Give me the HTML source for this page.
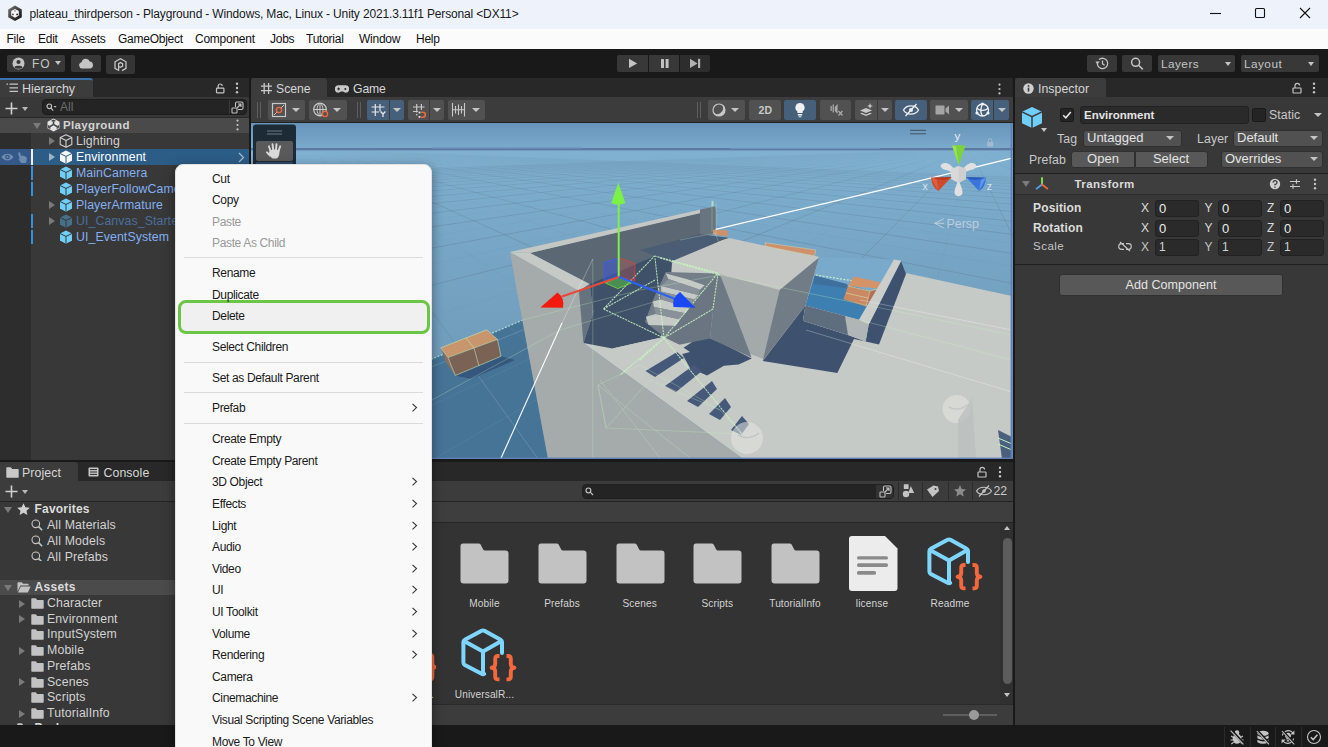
<!DOCTYPE html>
<html><head><meta charset="utf-8">
<style>
*{box-sizing:border-box;margin:0;padding:0}
html,body{width:1328px;height:747px;overflow:hidden;background:#191919;font-family:"Liberation Sans",sans-serif;font-size:12px;color:#d2d2d2}
.abs{position:absolute}
#titlebar{left:0;top:0;width:1328px;height:28.5px;background:#eef3fb;color:#1a1a1a;font-size:13px}
#menubar{left:0;top:28.5px;width:1328px;height:20.5px;background:#fbfbfb;color:#111;font-size:12px;letter-spacing:-0.25px}
#menubar span{position:absolute;top:3.5px}
#toolbar{left:0;top:49px;width:1328px;height:29px;background:#191919}
.tbtn{position:absolute;background:#383838;border-radius:2px;height:18px;top:5px}
.panel{position:absolute;background:#383838;overflow:hidden}
.tabbar{position:absolute;background:#282828;height:19px}
.tab{position:absolute;top:0;height:19px;background:#3c3c3c;border-radius:3px 3px 0 0;color:#d6d6d6;font-size:13px}
.row{position:absolute;left:0;height:16px;width:249px;font-size:13px;line-height:16px;white-space:nowrap}
.btn{position:absolute;background:#515151;border-radius:2px;height:20px}
.btn.on{background:#46607c}
.fld{position:absolute;background:#2a2a2a;border:1px solid #212121;border-radius:3px;color:#e4e4e4;font-size:13px;line-height:15px;padding-left:4px;height:17px}
.dd{position:absolute;background:#515151;border:1px solid #303030;border-radius:3px;color:#e4e4e4;font-size:13px;line-height:14px;padding-left:3px;height:17px}
.tri{position:absolute;width:0;height:0;border-left:4px solid transparent;border-right:4px solid transparent;border-top:5px solid #c4c4c4}
.trir{position:absolute;width:0;height:0;border-top:4px solid transparent;border-bottom:4px solid transparent;border-left:6px solid #7a7a7a}
.trid{position:absolute;width:0;height:0;border-left:4px solid transparent;border-right:4px solid transparent;border-top:6px solid #7a7a7a}
.lbl{position:absolute;white-space:nowrap}
#ctx{left:175px;top:164px;width:257px;height:590px;background:#f9f9f9;border:1px solid #e2e2e2;border-radius:8px 8px 0 0;color:#1b1b1b;font-size:12px;box-shadow:0 3px 12px rgba(0,0,0,.4)}
#ctx .mi{position:absolute;left:36px;white-space:nowrap;letter-spacing:-0.35px;line-height:16px}
#ctx .dis{color:#9a9a9a}
#ctx .sep{position:absolute;left:8px;width:239px;height:1px;background:#dadada}
#ctx .ar{position:absolute;left:234px;width:9px;height:9px}
</style></head><body>
<div id="titlebar" class="abs">
<svg class="abs" style="left:7px;top:5px" width="16" height="17" viewBox="0 0 16 17"><defs><linearGradient id="ug" x1="0" y1="0" x2="1" y2="1"><stop offset="0" stop-color="#787878"/><stop offset="0.55" stop-color="#3a3a3a"/><stop offset="1" stop-color="#0c0c0c"/></linearGradient></defs><path d="M8 0.6 L14.8 4.4 V12.2 L8 16 L1.2 12.2 V4.4 Z" fill="url(#ug)"/><path d="M8 4 L11.8 6.1 V10.5 L8 12.7 L4.2 10.5 V6.1 Z" fill="#f6f6f6"/><circle cx="8" cy="5.9" r="0.9" fill="#9a9a9a"/><circle cx="5.9" cy="9.4" r="0.9" fill="#4a4a4a"/><circle cx="10.1" cy="9.4" r="0.9" fill="#1c1c1c"/></svg>
<span class="lbl" style="left:29.5px;top:7px;font-size:12px;letter-spacing:-0.15px">plateau_thirdperson - Playground - Windows, Mac, Linux - Unity 2021.3.11f1 Personal &lt;DX11&gt;</span>
<svg class="abs" style="left:1200px;top:0" width="128" height="28" viewBox="0 0 128 28"><g stroke="#111" stroke-width="1.1" fill="none"><path d="M10 13.5 H21"/><rect x="55.5" y="8.5" width="9" height="9" rx="1"/><path d="M100 8 L110 18 M110 8 L100 18"/></g></svg>
</div>
<div id="menubar" class="abs"><span style="left:6.5px">File</span><span style="left:38px">Edit</span><span style="left:71px">Assets</span><span style="left:118px">GameObject</span><span style="left:195px">Component</span><span style="left:270px">Jobs</span><span style="left:306px">Tutorial</span><span style="left:359px">Window</span><span style="left:416px">Help</span></div>
<div id="toolbar" class="abs">
<div class="tbtn" style="left:7px;width:58px;top:6px;height:17px"></div>
<svg class="abs" style="left:12px;top:8px" width="13" height="13" viewBox="0 0 13 13"><circle cx="6.5" cy="6.5" r="6" fill="#c4c4c4"/><circle cx="6.5" cy="5" r="2.1" fill="#383838"/><path d="M2.4 10.2 C3 8.3 10 8.3 10.6 10.2 C9 12.2 4 12.2 2.4 10.2Z" fill="#383838"/></svg>
<span class="lbl" style="left:32px;top:7.5px;font-size:12px;color:#c4c4c4;letter-spacing:1px">FO</span>
<div class="tri" style="left:55px;top:12px;border-left-width:3.5px;border-right-width:3.5px;border-top-width:4px"></div>
<div class="tbtn" style="left:71px;width:30px;top:6px;height:17px"></div>
<svg class="abs" style="left:78px;top:9px" width="16" height="11" viewBox="0 0 16 11"><path d="M4 10.5 A3.2 3.2 0 0 1 3.6 4.2 A4.3 4.3 0 0 1 11.8 3.6 A3.5 3.5 0 0 1 12.3 10.5 Z" fill="#c4c4c4"/></svg>
<div class="tbtn" style="left:106px;width:29px;top:6px;height:19px;background:#353535"></div>
<svg class="abs" style="left:114px;top:9px" width="13" height="14" viewBox="0 0 13 14"><g fill="none" stroke="#c4c4c4" stroke-width="1.3"><path d="M3.8 12 L1 10.3 V3.8 L6.5 0.8 L12 3.8 V10.3 L8 12.6"/><path d="M4.6 13 V5.6 L6.5 4.6 L8.6 5.6 V8.2 L6.5 9.3 L4.8 8.5"/></g></svg>
<div class="tbtn" style="left:617px;width:31px;top:6px;height:17px;border-radius:2px 0 0 2px"></div>
<div class="tbtn" style="left:649px;width:30px;top:6px;height:17px;border-radius:0"></div>
<div class="tbtn" style="left:680px;width:30px;top:6px;height:17px;background:#2d2d2d;border-radius:0 2px 2px 0"></div>
<svg class="abs" style="left:617px;top:6px" width="94" height="17" viewBox="617 55 94 17"><g fill="#c4c4c4"><path d="M629 58.8 L637.2 63.4 L629 68 Z"/><rect x="661" y="59" width="3" height="9" rx="0.6"/><rect x="665.6" y="59" width="3" height="9" rx="0.6"/></g><g fill="#b0b0b0"><path d="M690 58.8 L697.6 63.4 L690 68 Z"/><rect x="698" y="58.8" width="2.2" height="9.2"/></g></svg>
<div class="tbtn" style="left:1087px;width:30px;top:6px;height:17px"></div>
<svg class="abs" style="left:1095px;top:7px" width="15" height="15" viewBox="0 0 15 15"><g fill="none" stroke="#c4c4c4" stroke-width="1.3"><path d="M2.3 7.5 A5.2 5.2 0 1 0 4 3.6"/><path d="M7.5 4.6 V7.8 L9.6 9.2"/></g><path d="M0.4 5.6 H4.8 L2.4 8.6Z" fill="#c4c4c4"/></svg>
<div class="tbtn" style="left:1122px;width:30px;top:6px;height:17px"></div>
<svg class="abs" style="left:1130px;top:8px" width="15" height="14" viewBox="0 0 15 14"><g fill="none" stroke="#c4c4c4" stroke-width="1.5"><circle cx="5.6" cy="5.3" r="4"/><path d="M8.6 8.3 L12.8 12.4"/></g></svg>
<div class="tbtn" style="left:1158px;width:77px;top:6px;height:17px"></div>
<span class="lbl" style="left:1161px;top:7.5px;font-size:11.8px;color:#c4c4c4;letter-spacing:0.45px">Layers</span>
<div class="tri" style="left:1224.5px;top:12.5px;border-left-width:3.5px;border-right-width:3.5px;border-top-width:4px"></div>
<div class="tbtn" style="left:1241px;width:78px;top:6px;height:17px"></div>
<span class="lbl" style="left:1244px;top:7.5px;font-size:11.8px;color:#c4c4c4;letter-spacing:0.45px">Layout</span>
<div class="tri" style="left:1307.5px;top:12.5px;border-left-width:3.5px;border-right-width:3.5px;border-top-width:4px"></div>
</div>
<!-- HIERARCHY -->
<div id="hier" class="panel" style="left:0;top:78px;width:249px;height:382px">
<div class="tabbar" style="left:0;top:0;width:249px"></div>
<div class="tab" style="left:0;width:93px;border-top:2px solid #3a72b0;border-radius:0 3px 0 0"></div>
<svg class="abs" style="left:6px;top:5px" width="12" height="10" viewBox="0 0 12 10"><g stroke="#c4c4c4" stroke-width="1.2"><path d="M0.5 1.2 H2 M3.5 1.2 H12 M3.5 4.8 H12 M3.5 8.4 H12"/></g></svg>
<span class="lbl" style="left:22px;top:4px;font-size:12.5px;color:#d6d6d6;letter-spacing:-0.05px">Hierarchy</span>
<svg class="abs" style="left:214px;top:4px" width="30" height="12" viewBox="0 0 30 12"><g fill="none" stroke="#c4c4c4" stroke-width="1.2"><rect x="2.5" y="6.2" width="7.4" height="4.6" rx="0.5"/><path d="M4.2 6.2 V4 A2 2 0 0 1 8.2 4"/></g><g fill="#c4c4c4"><circle cx="23" cy="1.8" r="1.2"/><circle cx="23" cy="6" r="1.2"/><circle cx="23" cy="10.2" r="1.2"/></g></svg>
<!-- toolbar -->
<svg class="abs" style="left:5px;top:24px" width="13" height="13" viewBox="0 0 13 13"><path d="M6.5 0.5 V12.5 M0.5 6.5 H12.5" stroke="#d0d0d0" stroke-width="1.6"/></svg>
<div class="tri" style="left:22px;top:29px;border-top-color:#b8b8b8;border-left-width:3.5px;border-right-width:3.5px;border-top-width:4px"></div>
<div class="abs" style="left:42px;top:21px;width:205px;height:16px;background:#242424;border:1px solid #1c1c1c;border-radius:4px"></div>
<div class="abs" style="left:229px;top:22px;width:1px;height:14px;background:#383838"></div><svg class="abs" style="left:46px;top:25px" width="11" height="9" viewBox="0 0 11 9"><g fill="none" stroke="#c0c0c0" stroke-width="1.2"><circle cx="3.3" cy="3.3" r="2.3"/><path d="M5 5 L7.2 7.6"/></g><path d="M7.6 3 H10.6 L9.1 4.8Z" fill="#c0c0c0"/></svg>
<span class="lbl" style="left:60px;top:22px;font-size:12px;color:#6e6e6e">All</span>
<svg class="abs" style="left:231px;top:23px" width="13" height="13" viewBox="0 0 13 13"><g fill="none" stroke="#c0c0c0" stroke-width="1.1"><path d="M4.5 6 V2.5 A1.5 1.5 0 0 1 6 1 H10.5 A1.5 1.5 0 0 1 12 2.5 V7 A1.5 1.5 0 0 1 10.5 8.5 H7"/><rect x="1" y="7" width="5" height="5" rx="0.8"/><path d="M6 7 L10 3 M7 3 H10 V6"/></g></svg>
<!-- rows bg -->
<div class="abs" style="left:0;top:38.6px;width:249px;height:1.2px;background:#282828"></div><div class="abs" style="left:0;top:39.8px;width:249px;height:15.2px;background:#4a4a4a"></div>
<div class="abs" style="left:0;top:55px;width:31px;height:327px;background:#2d2d2d"></div>
<div class="abs" style="left:0;top:71px;width:249px;height:16px;background:#2c5d87"></div>
<div class="abs" style="left:0;top:71px;width:31px;height:16px;background:#345887"></div><div class="abs" style="left:31px;top:71px;width:2px;height:16px;background:#f0f0f0"></div>
<div class="abs" style="left:31px;top:88px;width:2px;height:14px;background:#3b8fd9"></div>
<div class="abs" style="left:31px;top:104px;width:2px;height:14px;background:#3b8fd9"></div>
<div class="abs" style="left:31px;top:136px;width:2px;height:14px;background:#3b8fd9"></div>
<div class="abs" style="left:31px;top:152px;width:2px;height:14px;background:#3b8fd9"></div>
<!-- Playground -->
<div class="trid" style="left:33px;top:45px"></div>
<svg class="abs" style="left:47px;top:40px" width="13" height="14" viewBox="0 0 13 14"><path d="M6.5 0.5 L12.5 3.7 V10.3 L6.5 13.5 L0.5 10.3 V3.7 Z" fill="#e4e4e4"/><path d="M6.5 2.6 V6.4 M6.5 6.4 L2.3 9 M6.5 6.4 L10.7 9" stroke="#4b4b4b" stroke-width="1.6" fill="none"/><path d="M4.6 3.2 L6.5 2.2 L8.4 3.2 M1.6 7.2 V9.4 L3.4 10.4 M11.4 7.2 V9.4 L9.6 10.4" stroke="#4b4b4b" stroke-width="1.3" fill="none"/></svg>
<span class="lbl" style="left:63px;top:41px;font-size:11.5px;font-weight:bold;color:#d4d4d4;letter-spacing:0.35px">Playground</span>
<svg class="abs" style="left:235px;top:41px" width="5" height="12" viewBox="0 0 5 12"><g fill="#c4c4c4"><circle cx="2.5" cy="1.6" r="1.1"/><circle cx="2.5" cy="6" r="1.1"/><circle cx="2.5" cy="10.4" r="1.1"/></g></svg>
<!-- Lighting -->
<div class="trir" style="left:49px;top:59px"></div>
<svg class="abs" style="left:59px;top:56px" width="14" height="14" viewBox="0 0 14 14"><g fill="none" stroke="#d0d0d0" stroke-width="1.1" stroke-linejoin="round"><path d="M7 0.8 L12.8 3.6 V10.4 L7 13.2 L1.2 10.4 V3.6 Z"/><path d="M1.2 3.6 L7 6.4 L12.8 3.6 M7 6.4 V13.2"/></g></svg>
<span class="lbl" style="left:76px;top:56px;font-size:12.3px;color:#d2d2d2;letter-spacing:0.1px">Lighting</span>
<!-- Environment -->
<svg class="abs" style="left:1px;top:73px" width="28" height="13" viewBox="0 0 28 13"><g fill="#6e8caf"><path d="M0.5 6 C3 1.5 10 1.5 12.5 6 C10 10.5 3 10.5 0.5 6Z"/><path d="M17 2 L19 1 L20 5 L21.5 4.5 L23 5 L24.5 5.5 L26 7 L25 12 H20 L17.5 8 L18.6 7.4Z"/></g><circle cx="6.5" cy="6" r="2.3" fill="#345887"/><circle cx="6.5" cy="6" r="1.1" fill="#6e8caf"/></svg>
<div class="trir" style="left:49px;top:75px;border-left-color:#9fb4c8"></div>
<svg class="abs" style="left:59px;top:72px" width="14" height="14" viewBox="0 0 14 14"><path d="M7 0.6 L13 3.5 V10.5 L7 13.4 L1 10.5 V3.5 Z" fill="#f6f6f6"/><path d="M1 3.5 L7 6.4 V13.4 L1 10.5 Z" fill="#f6f6f6"/><path d="M13 3.5 L7 6.4 V13.4 L13 10.5 Z" fill="#f6f6f6"/><path d="M1 3.5 L7 6.4 L13 3.5 M7 6.4 V13.4" fill="none" stroke="#2c5d87" stroke-width="1"/></svg>
<span class="lbl" style="left:76px;top:72px;font-size:12.3px;color:#ffffff;letter-spacing:0.1px">Environment</span>
<svg class="abs" style="left:238px;top:74px" width="7" height="11" viewBox="0 0 7 11"><path d="M1 1 L5.5 5.5 L1 10" fill="none" stroke="#a8bfd6" stroke-width="1.2"/></svg>
<!-- others -->
<svg class="abs" style="left:59px;top:88px" width="14" height="14" viewBox="0 0 14 14"><path d="M7 0.6 L13 3.5 V10.5 L7 13.4 L1 10.5 V3.5 Z" fill="#6fcff8"/><path d="M1 3.5 L7 6.4 V13.4 L1 10.5 Z" fill="#6fcff8"/><path d="M13 3.5 L7 6.4 V13.4 L13 10.5 Z" fill="#6fcff8"/><path d="M1 3.5 L7 6.4 L13 3.5 M7 6.4 V13.4" fill="none" stroke="#383838" stroke-width="1"/></svg>
<span class="lbl" style="left:76px;top:88px;font-size:12.3px;color:#82b0f4;letter-spacing:0.1px">MainCamera</span>
<svg class="abs" style="left:59px;top:104px" width="14" height="14" viewBox="0 0 14 14"><path d="M7 0.6 L13 3.5 V10.5 L7 13.4 L1 10.5 V3.5 Z" fill="#6fcff8"/><path d="M1 3.5 L7 6.4 V13.4 L1 10.5 Z" fill="#6fcff8"/><path d="M13 3.5 L7 6.4 V13.4 L13 10.5 Z" fill="#6fcff8"/><path d="M1 3.5 L7 6.4 L13 3.5 M7 6.4 V13.4" fill="none" stroke="#383838" stroke-width="1"/></svg>
<span class="lbl" style="left:76px;top:104px;font-size:12.3px;color:#82b0f4;letter-spacing:0.1px">PlayerFollowCamera</span>
<div class="trir" style="left:49px;top:123px"></div>
<svg class="abs" style="left:59px;top:120px" width="14" height="14" viewBox="0 0 14 14"><path d="M7 0.6 L13 3.5 V10.5 L7 13.4 L1 10.5 V3.5 Z" fill="#6fcff8"/><path d="M1 3.5 L7 6.4 V13.4 L1 10.5 Z" fill="#6fcff8"/><path d="M13 3.5 L7 6.4 V13.4 L13 10.5 Z" fill="#6fcff8"/><path d="M1 3.5 L7 6.4 L13 3.5 M7 6.4 V13.4" fill="none" stroke="#383838" stroke-width="1"/></svg>
<span class="lbl" style="left:76px;top:120px;font-size:12.3px;color:#82b0f4;letter-spacing:0.1px">PlayerArmature</span>
<div class="trir" style="left:49px;top:139px"></div>
<svg class="abs" style="left:59px;top:136px" width="14" height="14" viewBox="0 0 14 14"><path d="M7 0.6 L13 3.5 V10.5 L7 13.4 L1 10.5 V3.5 Z" fill="#466f88"/><path d="M1 3.5 L7 6.4 V13.4 L1 10.5 Z" fill="#466f88"/><path d="M13 3.5 L7 6.4 V13.4 L13 10.5 Z" fill="#466f88"/><path d="M1 3.5 L7 6.4 L13 3.5 M7 6.4 V13.4" fill="none" stroke="#383838" stroke-width="1"/></svg>
<span class="lbl" style="left:76px;top:136px;font-size:12.3px;color:#4c6e9c;letter-spacing:0.1px">UI_Canvas_StarterAssetsInputs_Joysticks</span>
<svg class="abs" style="left:59px;top:152px" width="14" height="14" viewBox="0 0 14 14"><path d="M7 0.6 L13 3.5 V10.5 L7 13.4 L1 10.5 V3.5 Z" fill="#6fcff8"/><path d="M1 3.5 L7 6.4 V13.4 L1 10.5 Z" fill="#6fcff8"/><path d="M13 3.5 L7 6.4 V13.4 L13 10.5 Z" fill="#6fcff8"/><path d="M1 3.5 L7 6.4 L13 3.5 M7 6.4 V13.4" fill="none" stroke="#383838" stroke-width="1"/></svg>
<span class="lbl" style="left:76px;top:152px;font-size:12.3px;color:#82b0f4;letter-spacing:0.1px">UI_EventSystem</span>
</div>
<!-- SCENE -->
<div id="scene" class="panel" style="left:251px;top:78px;width:762px;height:382px;background:#3c3c3c">
<div class="tabbar" style="left:0;top:0;width:762px"></div>
<div class="tab" style="left:0;width:76px"></div>
<svg class="abs" style="left:10px;top:5px" width="11" height="11" viewBox="0 0 11 11"><path d="M3.2 0 V11 M7.6 0 V11 M0 3.2 H11 M0 7.6 H11" stroke="#c8c8c8" stroke-width="1.3"/></svg>
<span class="lbl" style="left:25px;top:4px;font-size:12.2px;color:#d6d6d6;letter-spacing:0px">Scene</span>
<svg class="abs" style="left:84px;top:7px" width="14" height="8" viewBox="0 0 14 8"><path d="M3.5 0.3 H10.5 A3.6 3.6 0 0 1 10.5 7.7 C9.3 7.7 8.8 6.5 7.8 6.5 H6.2 C5.2 6.5 4.7 7.7 3.5 7.7 A3.6 3.6 0 0 1 3.5 0.3Z" fill="#c8c8c8"/><path d="M2.2 3.9 H5 M3.6 2.5 V5.3" stroke="#282828" stroke-width="1"/><circle cx="10.3" cy="3.9" r="1" fill="#282828"/></svg>
<span class="lbl" style="left:102px;top:4px;font-size:12.2px;color:#d6d6d6;letter-spacing:-0.1px">Game</span>
<svg class="abs" style="left:746px;top:5px" width="5" height="12" viewBox="0 0 5 12"><g fill="#c4c4c4"><circle cx="2.5" cy="1.6" r="1.1"/><circle cx="2.5" cy="6" r="1.1"/><circle cx="2.5" cy="10.4" r="1.1"/></g></svg>
<!-- scene toolbar -->
<div class="abs" style="left:0;top:44px;width:762px;height:1px;background:#232323"></div>
<div id="stb" class="abs" style="left:-251px;top:-78px;width:0;height:0">
<div class="abs" style="left:257px;top:102px;width:1px;height:16px;background:#5e5e5e"></div><div class="abs" style="left:260px;top:102px;width:1px;height:16px;background:#5e5e5e"></div>
<div class="abs" style="left:357px;top:102px;width:1px;height:16px;background:#5e5e5e"></div><div class="abs" style="left:360px;top:102px;width:1px;height:16px;background:#5e5e5e"></div>
<div class="abs" style="left:697px;top:102px;width:1px;height:16px;background:#5e5e5e"></div><div class="abs" style="left:700px;top:102px;width:1px;height:16px;background:#5e5e5e"></div>
<div class="btn" style="left:268px;top:100px;width:37px"></div>
<div class="btn" style="left:309px;top:100px;width:38px"></div>
<div class="btn on" style="left:367px;top:100px;width:22px;border-radius:2px 0 0 2px"></div><div class="btn on" style="left:390px;top:100px;width:14px;border-radius:0 2px 2px 0"></div>
<div class="btn" style="left:408px;top:100px;width:21px;border-radius:2px 0 0 2px"></div><div class="btn" style="left:430px;top:100px;width:14px;border-radius:0 2px 2px 0"></div>
<div class="btn" style="left:448px;top:100px;width:37px"></div>
<div class="btn" style="left:708px;top:100px;width:37px"></div>
<div class="btn" style="left:749px;top:100px;width:32px"></div>
<div class="btn on" style="left:784px;top:100px;width:32px"></div>
<div class="btn" style="left:820px;top:100px;width:31px"></div>
<div class="btn" style="left:855px;top:100px;width:22px;border-radius:2px 0 0 2px"></div><div class="btn" style="left:878px;top:100px;width:14px;border-radius:0 2px 2px 0"></div>
<div class="btn on" style="left:895px;top:100px;width:32px"></div>
<div class="btn" style="left:930px;top:100px;width:38px"></div>
<div class="btn on" style="left:971px;top:100px;width:22px;border-radius:2px 0 0 2px"></div><div class="btn on" style="left:994px;top:100px;width:15px;border-radius:0 2px 2px 0"></div>
<span class="lbl" style="left:758.5px;top:104px;font-size:10.5px;font-weight:bold;color:#c8c8c8;letter-spacing:0.2px">2D</span>
<!-- dropdown triangles -->
<div class="tri" style="left:292px;top:108px;border-top-width:4px"></div>
<div class="tri" style="left:333px;top:108px;border-top-width:4px"></div>
<div class="tri" style="left:393px;top:108px;border-top-width:4px"></div>
<div class="tri" style="left:433px;top:108px;border-top-width:4px"></div>
<div class="tri" style="left:472px;top:108px;border-top-width:4px"></div>
<div class="tri" style="left:731px;top:108px;border-top-width:4px"></div>
<div class="tri" style="left:881px;top:108px;border-top-width:4px"></div>
<div class="tri" style="left:955px;top:108px;border-top-width:4px"></div>
<div class="tri" style="left:998px;top:108px;border-top-width:4px"></div>

<svg class="abs" style="left:251px;top:78px" width="762" height="45" viewBox="251 78 762 45">
<g fill="none" stroke="#c8c8c8" stroke-width="1.2">
<!-- pivot icon 272..286 -->
<rect x="272.5" y="103.5" width="13" height="13"/><path d="M274 115 L284 105" stroke-width="1"/>
<circle cx="279" cy="110" r="2.6" stroke="#f0683c" stroke-width="1.4" fill="#515151"/>
<!-- globe -->
<circle cx="320" cy="109.5" r="6.3"/><path d="M313.7 109.5 H326.3 M320 103.2 V115.8 M320 103.2 C316 106 316 113 320 115.8 M320 103.2 C324 106 324 113 320 115.8" stroke-width="1"/>
<circle cx="325" cy="114" r="2.6" stroke="#f0683c" stroke-width="1.4" fill="#515151"/>
<!-- grid Y -->
<path d="M375.3 104 V116 M380 104 V111.5 M371.5 107 H384.5 M371.5 112 H379" stroke="#e6e6e6" stroke-width="1.2"/>
<path d="M380.6 111.5 L383 114 L385.4 111.5 M383 114 V117" stroke="#e6e6e6" stroke-width="1.3"/>
<!-- grid snap -->
<path d="M416.7 104 V112.5 M421.4 104 V110 M413 107 H424.5 M413 111.5 H418"/>
<path d="M421.2 112.3 H422.8 A2.5 2.5 0 0 1 422.8 117.3 H421.2" stroke="#f0683c" stroke-width="1.6"/>
<!-- increment snap -->
<path d="M452.5 103 V116.5 M464.5 103 V116.5 M455.5 106 V113.5 M458.5 104.5 V115 M461.5 106 V113.5 M452.5 109.8 H464.5" stroke-width="1.1"/>
<!-- shading sphere -->
<circle cx="719" cy="110" r="6"/>
<!-- light bulb -->
</g>
<rect x="418.6" y="111.6" width="1.8" height="1.8" fill="#e6e6e6"/><rect x="418.6" y="116" width="1.8" height="1.8" fill="#e6e6e6"/><rect x="416" y="114" width="1.4" height="1.4" fill="#c8c8c8"/>
<path d="M722.12 104.88 A6 6 0 1 1 713.88 113.12 A6 6 0 0 0 722.12 104.88Z" fill="#c8c8c8"/>
<path d="M800 103 A4.6 4.6 0 0 1 802.6 111.4 V113 H797.4 V111.4 A4.6 4.6 0 0 1 800 103Z M797.8 114 H802.2 V115.4 H797.8Z M798.6 116.2 H801.4 V117.2 H798.6Z" fill="#f0f0f0"/>
<!-- audio muted -->
<g fill="#a8a8a8"><rect x="830.5" y="106" width="1.3" height="5"/><rect x="832.6" y="104.5" width="1.3" height="8"/><path d="M834.8 107 L837.6 104 V114 L834.8 111Z"/></g>
<path d="M838.5 111 L842.5 115.5 M842.5 111 L838.5 115.5" stroke="#a8a8a8" stroke-width="1.3" fill="none"/>
<!-- fx layers -->
<g fill="#c8c8c8"><path d="M860 110.5 L866 108 L872 110.5 L866 113Z"/><path d="M860 113.5 L861.8 112.8 L866 114.6 L870.2 112.8 L872 113.5 L866 116Z"/><path d="M870 103 L870.8 105.2 L873 106 L870.8 106.8 L870 109 L869.2 106.8 L867 106 L869.2 105.2Z"/></g>
<!-- hidden eye -->
<g fill="none" stroke="#f0f0f0" stroke-width="1.3"><path d="M903.5 110 C906.5 104.5 915.5 104.5 918.5 110 C915.5 115.5 906.5 115.5 903.5 110Z"/><path d="M905.5 116 L916.5 104"/></g><circle cx="911" cy="110" r="2" fill="#f0f0f0"/>
<!-- camera -->
<g fill="#a4a4a4"><rect x="935.5" y="105.5" width="9" height="9" rx="0.8"/><path d="M945.5 108.5 L949 105.5 V114.5 L945.5 111.5Z"/></g>
<!-- gizmos sphere -->
<g fill="none" stroke="#f0f0f0" stroke-width="1.3"><circle cx="982.5" cy="110" r="6"/><path d="M976.8 108.2 C980 111 985 111 988.2 108.2 M982.5 104 C980.5 108 980.5 113 982.5 116"/></g>
<g fill="#f0f0f0"><circle cx="982.5" cy="104" r="1.6"/><circle cx="977" cy="113" r="1.6"/><circle cx="988" cy="113" r="1.6"/></g>
</svg>

</div>
<!--VIEWSTART--><svg class="abs" style="left:0;top:45px" width="762" height="337" viewBox="251 123 762 337">
<defs>
<linearGradient id="sky" x1="0" y1="0" x2="0" y2="1"><stop offset="0" stop-color="#6894bb"/><stop offset="1" stop-color="#7cadcd"/></linearGradient>
<linearGradient id="gnd" x1="0" y1="0" x2="0" y2="1"><stop offset="0" stop-color="#80b1d1"/><stop offset="0.3" stop-color="#77a6c6"/><stop offset="1" stop-color="#6b94b2"/></linearGradient>
<clipPath id="gclip"><rect x="251" y="150" width="762" height="309"/></clipPath>
<linearGradient id="gfade" gradientUnits="userSpaceOnUse" x1="0" y1="150" x2="0" y2="230"><stop offset="0" stop-color="#587892" stop-opacity="0"/><stop offset="0.25" stop-color="#587892" stop-opacity="0.18"/><stop offset="1" stop-color="#5c7c96" stop-opacity="0.42"/></linearGradient><linearGradient id="gfade2" gradientUnits="userSpaceOnUse" x1="0" y1="150" x2="0" y2="260"><stop offset="0" stop-color="#587892" stop-opacity="0"/><stop offset="0.3" stop-color="#587892" stop-opacity="0.06"/><stop offset="1" stop-color="#5c7c96" stop-opacity="0.16"/></linearGradient><clipPath id="fclip"><path d="M251 437 L522.8 320 L548 458 L251 458Z"/></clipPath></defs>
<rect x="251" y="123" width="762" height="28" fill="url(#sky)"/>
<rect x="251" y="150" width="762" height="309" fill="url(#gnd)"/>
<rect x="251" y="148" width="762" height="2.4" fill="#5d7aa4"/>
<rect x="432" y="147.4" width="150" height="1.2" fill="#6c93bd"/><rect x="730" y="147.8" width="150" height="1.2" fill="#6c93bd"/>
<!-- ground grid -->
<g clip-path="url(#gclip)" fill="none">
<path d="M970 149 L-630 208.5 M970 149 L-630 212.0 M970 149 L-630 215.9 M970 149 L-630 220.3 M970 149 L-630 225.3 M970 149 L-630 231.1 M970 149 L-630 237.8 M970 149 L-630 245.8 M970 149 L-630 255.3 M970 149 L-630 266.9 M970 149 L-630 281.3 M970 149 L-630 299.8 M970 149 L-630 324.2 M970 149 L-630 358.2 M970 149 L-630 408.3 M970 149 L-630 490.2 M970 149 L-630 647.4 M970 149 L-630 1073.9 M970 149 L-630 6549.0 M970 149 L2570 1449.8 M970 149 L2570 739.4 M970 149 L2570 530.9 M970 149 L2570 431.2 M970 149 L2570 372.8 M970 149 L2570 334.4 M970 149 L2570 307.3 M315 149 L1915 1241.2 M315 149 L1915 690.5 M315 149 L1915 509.0 M315 149 L1915 418.6 M315 149 L1915 364.5 M315 149 L1915 328.5 M315 149 L1915 302.8 M315 149 L1915 283.5 M315 149 L1915 268.5 M315 149 L1915 256.6 M315 149 L1915 246.8 M315 149 L1915 238.6 M315 149 L1915 231.7 M315 149 L1915 225.8 M315 149 L1915 220.7 M315 149 L1915 216.2 M315 149 L1915 212.2" stroke="url(#gfade2)" stroke-width="0.6"/>
<path d="M970 149 L-630 206.9 M970 149 L-630 210.2 M970 149 L-630 213.9 M970 149 L-630 218.0 M970 149 L-630 222.7 M970 149 L-630 228.1 M970 149 L-630 234.3 M970 149 L-630 241.6 M970 149 L-630 250.3 M970 149 L-630 260.8 M970 149 L-630 273.7 M970 149 L-630 290.0 M970 149 L-630 311.1 M970 149 L-630 339.7 M970 149 L-630 380.5 M970 149 L-630 443.7 M970 149 L-630 554.1 M970 149 L-630 796.8 M970 149 L-630 1765.2 M970 149 L2570 3414.3 M970 149 L2570 961.2 M970 149 L2570 612.8 M970 149 L2570 473.5 M970 149 L2570 398.6 M970 149 L2570 351.8 M970 149 L2570 319.8 M315 149 L1915 2371.2 M315 149 L1915 873.0 M315 149 L1915 581.4 M315 149 L1915 457.3 M315 149 L1915 388.5 M315 149 L1915 344.8 M315 149 L1915 314.6 M315 149 L1915 292.5 M315 149 L1915 275.6 M315 149 L1915 262.2 M315 149 L1915 251.4 M315 149 L1915 242.5 M315 149 L1915 235.0 M315 149 L1915 228.6 M315 149 L1915 223.1 M315 149 L1915 218.4 M315 149 L1915 214.1" stroke="url(#gfade)" stroke-width="0.9"/>
</g>
<!-- dark floor lower-left -->
<path d="M251 437 L522.8 320 L548 458 L251 458Z" fill="#467497"/>
<path d="M251 437 L522.8 320" stroke="#b9e6e0" stroke-width="1.3" stroke-dasharray="2 1.5" fill="none" opacity="0.8"/>
<g clip-path="url(#fclip)" fill="none"><path d="M970 149 L-630 465.2 M970 149 L-630 490.2 M970 149 L-630 519.4 M970 149 L-630 595.9 M970 149 L-630 647.4 M970 149 L-630 712.4 M970 149 L-630 910.9 M970 149 L-630 1073.9 M970 149 L-630 1325.5 M970 149 L-630 2729.6 M970 149 L-630 6549.0 M970 149 L2570 13482.3 M970 149 L2570 2009.5 M970 149 L2570 1449.8 M970 149 L2570 1149.0 M315 149 L1915 1613.5 M315 149 L1915 1241.2 M315 149 L1915 1019.7 M315 149 L1915 768.6 M315 149 L1915 690.5 M315 149 L1915 629.8 M315 149 L1915 541.9 M315 149 L1915 509.0 M315 149 L1915 481.1 M315 149 L1915 436.6 M315 149 L1915 418.6 M315 149 L1915 402.7" stroke="#7fa8c6" stroke-opacity="0.22" stroke-width="0.7"/><path d="M970 149 L-630 443.7 M970 149 L-630 554.1 M970 149 L-630 796.8 M970 149 L-630 1765.2 M970 149 L2570 3414.3 M315 149 L1915 2371.2 M315 149 L1915 873.0 M315 149 L1915 581.4 M315 149 L1915 457.3" stroke="#8fb6d0" stroke-opacity="0.4" stroke-width="0.9"/></g>
<!-- left orange box -->
<path d="M455 375.5 L501 356.3 L515 360 L471 379Z" fill="#35577d"/>
<path d="M440.8 347.8 L486.6 329.8 L497.5 339.4 L448 357.5Z" fill="#c8966c"/>
<path d="M448 357.5 L497.5 339.4 L501 356.3 L455.3 375.5Z" fill="#7a6355"/>
<path d="M440.8 347.8 L448 357.5 L455.3 375.5 L446 362Z" fill="#8d6f5c"/>
<path d="M440.8 347.8 L486.6 329.8 L497.5 339.4 L501 356.3 L455.3 375.5 L448 357.5 L497.5 339.4 M448 357.5 L440.8 347.8 M466 338 L474 348 L479 366" stroke="#c9e8b8" stroke-width="0.7" fill="none" opacity="0.8"/>
<!-- big lit platform -->
<path d="M583.5 343 L600 300 L700 234 L819 257 L860 320 L901 272 L1012 296 L1012 459 L743 459Z" fill="#c6cac6"/>
<!-- pool & ground peek between block and thin wall : ground first -->
<path d="M819 257 L894 259.5 L859 319.8 L806 305.3Z" fill="#79aacc"/>
<path d="M814.5 276 L875.1 292 L859 319.8 L805.4 305.4Z" fill="#3d7fb1"/><path d="M814.8 275.5 L847 284 L846 288 L813.6 284Z" fill="#3f6f9c"/>

<path d="M815.7 275 L854 281" stroke="#c9f0c0" stroke-width="1.2" stroke-dasharray="2 1.5"/>
<!-- right orange box -->
<path d="M854 276.4 L880.7 282.4 L879.5 288.4 L848 286Z" fill="#d59468"/>
<path d="M848 286 L870 291 L866 306.5 L843.4 299.3Z" fill="#c98a63"/>
<path d="M870 291 L879.5 288.4 L876 296 L866 306.5Z" fill="#b56f52"/>
<path d="M848 286 L870 291 L879.5 288.4 M870 291 L866 306.5 M846 293 L868 298" stroke="#d8e8b0" stroke-width="0.7" fill="none" opacity="0.8"/>
<!-- shadows on platform -->
<path d="M901 261 L906 274 L879 344.5 L865.6 341.5 L868.7 324.6Z" fill="#3e5270"/>
<path d="M762.7 361 L805.4 305.4 L803 320.7 L848 335 L865.6 341.5 L854 339 L837.3 373Z" fill="#3e5270"/>
<path d="M700 337 L709.6 337 L751.8 358.6 L738.6 364.6 L724 365.8 L707 375.4 L690 368 L680 350Z" fill="#3e5270"/>
<!-- thin wall -->
<path d="M894 259.5 L901.2 260.7 L868.7 324.6 L859 319.8Z" fill="#cbcecb"/>
<path d="M805.4 305.4 L859 319.8 L868.7 324.6 L865.6 341.5 L848 335 L803 320.7Z" fill="#b0b5b6"/><path d="M805.4 305.4 L845 316 L848 335 L803 320.7Z" fill="#5f6e7e"/>
<!-- back wall -->
<path d="M530 253 L715.7 209 L715.7 234 L700 236 L640 262 L589.5 284Z" fill="#5b6773"/>
<path d="M510 252 L715.7 206.2 L715.7 209.5 L530 253Z" fill="#c4c7c4"/>
<path d="M700 209.6 L715.7 206.2 L715.7 232 L700 236Z" fill="#68747f"/>
<!-- upper floor shadow region -->
<path d="M589.5 284 L640 262 L700 236 L729 238 L722.7 240 L672 263 L670 290 L662 322 L661.2 337.6 L612.4 348.4 L583.5 343 L593.4 312.3Z" fill="#3f5069"/>
<!-- left wall outer & ledge -->
<path d="M510 252 L579 291 L583.5 343 L743 459 L548 459 L516.7 290Z" fill="#a5aaab"/>
<path d="M510 252 L530 253 L589.5 284 L579 291Z" fill="#c6cac6"/>
<path d="M579 291 L589.5 284 L593.4 312.3 L583.5 343Z" fill="#66727e"/>
<!-- block -->
<path d="M640 250 L700 234 L729 238 L722.7 240 L670 262Z" fill="#4b5d75"/>
<path d="M670 262 L722.7 240 L729 238 L819 257 L779.6 290 L717.2 273.4Z" fill="#c4c7c4"/>
<path d="M717.2 273.4 L779.6 290 L764.2 359.3 L710 338.5Z" fill="#a4a9aa"/>
<path d="M717.2 273.4 L721 277 L751.6 357.5 L710 338.5Z" fill="#6d7985"/>
<path d="M819 257.5 L779.6 290 L762.8 360.8 L805.4 305.4Z" fill="#717c86"/>
<path d="M765 242.7 L815.7 249.9 L814.5 255.9 L766 246.3Z" fill="#cf916b"/><path d="M765 242.7 L815.7 249.9 L814.5 255.9 L766 246.3Z" fill="none" stroke="#d8e8b0" stroke-width="0.6" opacity="0.7"/>
<path d="M713 229.4 L727.7 230.6 L727.7 236.6 L713 234.2Z" fill="#cf916b"/>
<!-- stair stringer -->
<path d="M665.7 272 L717.2 273.4 L713.6 308.7 L664.8 337.6 L645 322 L653 300Z" fill="#737e89"/><path d="M717.2 273.4 L713.6 308.7 L664.8 337.6Z" fill="#6b7682"/>
<path d="M664.8 337.6 L713.6 308.7 L717.2 273.4 L710 338.5 L679.3 344.8Z" fill="#6a7581"/>
<!-- upper stairs treads -->
<path d="M665.7 273.4 L686.5 278.9 L704.6 285.2 L700 289.7 L668.4 278.9Z" fill="#c6cac6"/>
<path d="M661.2 286.1 L698.3 295.1 L694.6 299.6 L661.2 291.5Z" fill="#c6cac6"/>
<path d="M653 301.5 L661.2 299.6 L689.2 307.8 L685.6 313.2 L654 306.9Z" fill="#c6cac6"/>
<path d="M645.8 316.8 L655.8 314.1 L680.2 319.5 L675.7 325.8 L648.6 325Z" fill="#c6cac6"/>
<path d="M668.4 278.9 L700 289.7 L698.3 295.1 L661.2 286.1Z M661.2 291.5 L694.6 299.6 L689.2 307.8 L661.2 299.6Z M654 306.9 L685.6 313.2 L680.2 319.5 L655.8 314.1Z" fill="#89929a"/>
<!-- landing + lower flight -->
<path d="M612.4 348.4 L661.2 337.6 L679.3 344.8 L690 352 L640 365Z" fill="#c6cac6"/>
<g fill="#46597a">
<path d="M645.5 371 L677 352 L684 358 L655 377Z"/>
<path d="M665 386 L694 365 L702 371 L676 392Z"/>
<path d="M687 401 L712 381 L717 389 L698 407Z"/>
<path d="M709 414 L725 398 L731 407 L720 420Z"/>
<path d="M731 430 L742 416 L749 424 L741 435Z"/>
</g>
<!-- white lines -->
<path d="M715.7 229.4 L900 185.7 L1012 158.1" stroke="#fff" stroke-width="1.2" fill="none"/>
<path d="M592.8 259 L562 323" stroke="#fff" stroke-width="1" opacity="0.3"/><path d="M562 323 L500.6 459" stroke="#fff" stroke-width="1.2" opacity="0.95"/>
<!-- green wireframes -->
<g fill="none" stroke="#c8f7c0" stroke-width="1.1" opacity="0.85" stroke-dasharray="2.2 0.8">
<path d="M654.5 256 L718 273 L713 309 L664 338 L655 258 M603.5 309 L654.5 256 M603.5 309 L664 338 M603.5 309 L655 280 M660 258 L720 275 M664 338 L718 273"/>
<path d="M664 338 L742 434 M640 360 L664 338 M664 338 L620 375" />
</g>
<g fill="none" stroke="#c4f3bd" stroke-width="0.7" opacity="0.4">
<path d="M598 385 L640 365 L720 410 L742 434 L606 428 L598 385 L606 428 M598 385 L690 458 M606 428 L650 380 L720 410 M600 380 L660 458 M592.8 259 L592.8 458 M712 204 L712 232 M716 203 L716 235 M680 240 L715 233 L720 245"/>
<path d="M522.8 320 L640 290 L720 275 L1012 335 M432 400 L560 330 L660 300 M860 320 L1012 360"/>
</g>
<path d="M711.5 201 L713.5 201 L713.5 206 L711.5 206Z" fill="#c4e8c0" opacity="0.8"/>
<!-- transform gizmo -->
<path d="M604 262.4 L619 258 L619 277 L604 280.6Z" fill="#3b5bd6" fill-opacity="0.55" stroke="#3b5bff" stroke-width="0.8"/>
<path d="M619 258 L634.9 263.6 L634.9 280.6 L619 277Z" fill="#c05050" fill-opacity="0.35" stroke="#e04040" stroke-width="0.8"/>
<path d="M619 277 L631.5 283 L617.8 288.6 L605.3 283Z" fill="#58c040" fill-opacity="0.55" stroke="#70e048" stroke-width="0.8"/>
<path d="M618.7 277 V203" stroke="#7df04a" stroke-width="2"/>
<path d="M618.3 182.5 L611.2 203 Q618.3 206.5 625.4 203Z" fill="#7bf046"/>
<path d="M619 277 L562 296.5" stroke="#e84a3a" stroke-width="2"/>
<path d="M540.4 307.5 L557.5 292.5 Q565 298 563 307.8Z" fill="#f21a10"/>
<path d="M619 277 L675 299" stroke="#2e62f4" stroke-width="2"/>
<path d="M695.5 307.8 L680 292 Q671.5 298 673.5 307Z" fill="#1c48f4"/>
<!-- joystick circles -->
<circle cx="747" cy="438" r="16" fill="#e6e6e2" fill-opacity="0.55"/><path d="M738 435 Q748 441 759 433" stroke="#b8bab6" stroke-width="1.2" fill="none" opacity="0.7"/>
<circle cx="956.6" cy="409" r="14" fill="#e6e6e2" fill-opacity="0.55"/><path d="M949 407 Q958 412 967 405" stroke="#b8bab6" stroke-width="1.2" fill="none" opacity="0.7"/>
<path d="M958 420 L972 398 L976 459 L958 459Z" fill="#b9bdbc" opacity="0.75"/>
<path d="M998 430 L1012 437 L1012 459 L1002 459Z" fill="#4b607e"/>
<path d="M998 438 L1012 444 M998 444 L1012 450" stroke="#c4f3bd" stroke-width="1"/>
<!-- platform subtle lines -->
<g stroke="#ffffff" stroke-opacity="0.35" stroke-width="0.8" fill="none"><path d="M806 330 L1012 392 M860 300 L1012 330"/></g>
<!-- orientation gizmo -->
<g>
<path d="M958.5 175 L948 170.5 Q941.5 169.5 940.5 166 Q941.5 162.5 946.5 163 Q950 164 953.5 168Z" fill="#e0e0e0"/>
<path d="M958.5 175 L969 170.5 Q975.5 169.5 976.5 166 Q975.5 162.5 970.5 163 Q967 164 963.5 168Z" fill="#e0e0e0"/>
<path d="M958.5 178 L956.5 185 Q953.5 191 955 194.5 Q958.5 198 962 194.5 Q963.5 191 960.5 185Z" fill="#e0e0e0"/>
<path d="M951 169 L958.5 166 L966 169 L966 179 L958.5 183 L951 179Z" fill="#d9d9d9"/>
<path d="M958.5 166 L966 169 L966 179 L958.5 183Z" fill="#cfcfcf"/>
<path d="M952 145.8 Q958.5 144.2 965.5 145.8 L958.8 165.2Z" fill="#7cd23e"/><path d="M952 145.8 L958.8 165.2 L956 146Z" fill="#94e25a"/>
<path d="M931 177.8 L951.7 177 L938.4 191 Q932.5 188.5 931 177.8Z" fill="#cf4a2c"/><path d="M931 177.8 L951.7 177 L946 179.5 Q938 180.5 931 177.8Z" fill="#b63a20"/><path d="M931 177.8 L938.4 191 L936.5 179Z" fill="#e0603e"/>
<path d="M965.8 177 L985.9 177.8 Q985.5 188 979.1 191Z" fill="#3b74da"/><path d="M965.8 177 L985.9 177.8 Q979 180.5 971.5 179.5Z" fill="#2a58ba"/><path d="M985.9 177.8 L979.1 191 L981 179.5Z" fill="#5c96f0"/>
</g>
<g font-family="Liberation Sans, sans-serif" fill="#e8eef4">
<text x="954.5" y="140" font-size="11.5">y</text><text x="922.5" y="190" font-size="10.5" fill="#dbe4ee">x</text><text x="986.8" y="190" font-size="10.5" fill="#dbe4ee">z</text>
<text x="946.6" y="227.8" font-size="12.5" fill="#bccddd" letter-spacing="-0.1">Persp</text>
</g>
<path d="M943.8 218.8 L934.6 223.3 L943.8 227.8 M934.6 223.3 H944" stroke="#bccddd" stroke-width="1" fill="none"/>
<path d="M910 130.3 H926 M910 133.8 H926" stroke="#3c4a56" stroke-width="1" opacity="0.9"/>
<g opacity="0.9"><rect x="987" y="142" width="6.2" height="4.6" fill="#a8bcd0"/><path d="M988.4 142 V140.2 A1.7 1.7 0 0 1 991.8 140.2 V142" fill="none" stroke="#a8bcd0" stroke-width="1"/></g>
<!-- tool overlay -->
<rect x="253" y="124.5" width="43" height="60" rx="3" fill="#1d2b37"/>
<path d="M267 131 H282 M267 134 H282" stroke="#6a7a88" stroke-width="1"/>
<rect x="256" y="141" width="37" height="20" rx="2" fill="#5a5a5a"/>
<rect x="256" y="162" width="37" height="20" fill="#2f4a68"/>
<g stroke="#dadada" stroke-width="1.9" stroke-linecap="round" fill="none"><path d="M270.6 151 L268.9 146.3 M273.2 150 L272.5 144.2 M276 150 L276.5 144.2 M278.6 151 L280.2 146.3 M270 155.5 L267 152.3"/></g><path d="M269.6 150.5 Q274.5 148.5 279.6 150.5 L279.2 154.5 Q278.5 158 276.8 158.6 H272.6 Q270.2 157 269 153.5Z" fill="#dadada"/>
<!-- border -->
<rect x="251" y="457.6" width="762" height="1.8" fill="#5f80b6"/><rect x="1010.6" y="123" width="1.8" height="336" fill="#5f80b6"/>
<rect x="251" y="459" width="762" height="2" fill="#191919"/>
</svg>
<!--VIEWEND-->
</div>
<!-- INSPECTOR -->
<div id="insp" class="panel" style="left:1015px;top:78px;width:313px;height:647px">
<div style="position:absolute;left:-1015px;top:-78px;width:0;height:0">
<div class="tabbar" style="left:1015px;top:78px;width:313px"></div>
<div class="tab" style="left:1015px;top:78px;width:91px"></div>
<svg class="abs" style="left:1023px;top:83px" width="11" height="11" viewBox="0 0 11 11"><circle cx="5.5" cy="5.5" r="5.2" fill="#d0d0d0"/><rect x="4.7" y="4.6" width="1.6" height="4" fill="#3c3c3c"/><circle cx="5.5" cy="2.9" r="0.95" fill="#3c3c3c"/></svg>
<span class="lbl" style="left:1038px;top:81.5px;font-size:12.3px;color:#d6d6d6;letter-spacing:0.05px">Inspector</span>
<svg class="abs" style="left:1290px;top:82px" width="30" height="12" viewBox="0 0 30 12"><g fill="none" stroke="#c4c4c4" stroke-width="1.2"><rect x="3" y="6" width="8" height="5" rx="0.5"/><path d="M5 6 V3.6 A2.3 2.3 0 0 1 9.6 3.6"/></g><g fill="#c4c4c4"><circle cx="24" cy="1.8" r="1.2"/><circle cx="24" cy="6" r="1.2"/><circle cx="24" cy="10.2" r="1.2"/></g></svg>
<!-- header -->
<svg class="abs" style="left:1021px;top:106px" width="22" height="23" viewBox="0 0 22 23"><path d="M11 1 L21 5.8 V17.2 L11 22 L1 17.2 V5.8Z" fill="#6fcff8"/><path d="M1 5.8 L11 10.6 L21 5.8 M11 10.6 V22" fill="none" stroke="#383838" stroke-width="1.4"/></svg>
<div class="tri" style="left:1041px;top:128px;border-left-width:3px;border-right-width:3px;border-top-width:4px"></div>
<div class="abs" style="left:1060px;top:108px;width:14px;height:14px;background:#242424;border:1px solid #1a1a1a;border-radius:2px"></div>
<svg class="abs" style="left:1062px;top:110px" width="10" height="10" viewBox="0 0 10 10"><path d="M1.2 5.2 L3.8 7.8 L8.8 2" fill="none" stroke="#e8e8e8" stroke-width="1.5"/></svg>
<div class="fld" style="left:1080px;top:106px;width:169px;height:18px;line-height:16px;font-weight:bold;font-size:11.5px;padding-left:3px;letter-spacing:0px">Environment</div>
<div class="abs" style="left:1252px;top:108px;width:14px;height:14px;background:#242424;border:1px solid #1a1a1a;border-radius:2px"></div>
<span class="lbl" style="left:1269px;top:108px;font-size:12.3px;color:#c8c8c8;letter-spacing:0.1px">Static</span>
<div class="tri" style="left:1314px;top:113px;border-top-width:4.5px"></div>
<span class="lbl" style="left:1057px;top:131.5px;font-size:12.3px;color:#c8c8c8;letter-spacing:0.1px">Tag</span>
<div class="dd" style="left:1083px;top:130px;width:99px">Untagged</div><div class="tri" style="left:1166px;top:136px;border-top-width:4.5px"></div>
<span class="lbl" style="left:1197px;top:131.5px;font-size:12.3px;color:#c8c8c8;letter-spacing:0.1px">Layer</span>
<div class="dd" style="left:1233px;top:130px;width:90px">Default</div><div class="tri" style="left:1310px;top:136px;border-top-width:4.5px"></div>
<span class="lbl" style="left:1029px;top:152.5px;font-size:12.3px;color:#c8c8c8;letter-spacing:0.1px">Prefab</span>
<div class="dd" style="left:1071px;top:151px;width:64px;text-align:center;padding-left:0;border-radius:3px 0 0 3px;background:#585858">Open</div>
<div class="dd" style="left:1134.5px;top:151px;width:73px;text-align:center;padding-left:0;border-radius:0 3px 3px 0;background:#585858">Select</div>
<div class="dd" style="left:1221px;top:151px;width:102px">Overrides</div><div class="tri" style="left:1310px;top:157px;border-top-width:4.5px"></div>
<div class="abs" style="left:1015px;top:172.5px;width:313px;height:1px;background:#1f1f1f"></div>
<!-- transform header -->
<div class="abs" style="left:1015px;top:173.5px;width:313px;height:20px;background:#3e3e3e"></div>
<div class="trid" style="left:1021.5px;top:181px"></div>
<svg class="abs" style="left:1035px;top:177px" width="14" height="14" viewBox="0 0 14 14"><path d="M7 7.5 V1" stroke="#7ff04a" stroke-width="1.8" stroke-linecap="round"/><path d="M7 7.5 L1.6 11.6" stroke="#4aa8f0" stroke-width="1.8" stroke-linecap="round"/><path d="M7 7.5 L12.4 11.6" stroke="#f0683c" stroke-width="1.8" stroke-linecap="round"/></svg>
<span class="lbl" style="left:1074.5px;top:177.5px;font-size:11.5px;font-weight:bold;color:#dadada;letter-spacing:0.45px">Transform</span>
<svg class="abs" style="left:1269px;top:178px" width="52" height="12" viewBox="0 0 52 12"><circle cx="6" cy="6" r="5.2" fill="#d0d0d0"/><path d="M4.2 4.6 A1.9 1.9 0 1 1 6 6.4 V7.4" stroke="#3e3e3e" stroke-width="1.3" fill="none"/><circle cx="6" cy="9.2" r="0.8" fill="#3e3e3e"/><g stroke="#c8c8c8" stroke-width="1.2" fill="none"><path d="M21 3.5 H31 M21 8.5 H31 M27.5 1.2 V5.8 M24 6.2 V10.8"/></g><g fill="#c4c4c4"><circle cx="46" cy="1.8" r="1.2"/><circle cx="46" cy="6" r="1.2"/><circle cx="46" cy="10.2" r="1.2"/></g></svg>
<div class="abs" style="left:1015px;top:193.5px;width:313px;height:1px;background:#2c2c2c"></div>
<!-- rows -->
<span class="lbl" style="left:1033px;top:200.5px;font-size:12px;font-weight:bold;color:#dcdcdc;letter-spacing:0.15px">Position</span>
<span class="lbl" style="left:1033px;top:220.5px;font-size:12px;font-weight:bold;color:#dcdcdc;letter-spacing:0.15px">Rotation</span>
<span class="lbl" style="left:1033px;top:240px;font-size:11.5px;color:#c4c4c4;letter-spacing:0.5px">Scale</span>
<svg class="abs" style="left:1118px;top:241px" width="14" height="11" viewBox="0 0 14 11"><g fill="none" stroke="#c8c8c8" stroke-width="1.1"><path d="M6 2.6 H3.6 A2.9 2.9 0 0 0 3.6 8.4 H6 M8 2.6 H10.4 A2.9 2.9 0 0 1 10.4 8.4 H8 M2 1 L12 10"/></g></svg>
<span class="lbl" style="left:1141px;top:200.5px;font-size:12px;color:#dcdcdc">X</span><div class="fld" style="left:1155px;top:199.5px;width:43.5px;height:17px;line-height:15px;padding-left:3px;font-size:13px;color:#ececec">0</div><span class="lbl" style="left:1204.5px;top:200.5px;font-size:12px;color:#dcdcdc">Y</span><div class="fld" style="left:1218px;top:199.5px;width:43.5px;height:17px;line-height:15px;padding-left:3px;font-size:13px;color:#ececec">0</div><span class="lbl" style="left:1267px;top:200.5px;font-size:12px;color:#dcdcdc">Z</span><div class="fld" style="left:1280px;top:199.5px;width:43.5px;height:17px;line-height:15px;padding-left:3px;font-size:13px;color:#ececec">0</div><span class="lbl" style="left:1141px;top:220.5px;font-size:12px;color:#dcdcdc">X</span><div class="fld" style="left:1155px;top:219.5px;width:43.5px;height:17px;line-height:15px;padding-left:3px;font-size:13px;color:#ececec">0</div><span class="lbl" style="left:1204.5px;top:220.5px;font-size:12px;color:#dcdcdc">Y</span><div class="fld" style="left:1218px;top:219.5px;width:43.5px;height:17px;line-height:15px;padding-left:3px;font-size:13px;color:#ececec">0</div><span class="lbl" style="left:1267px;top:220.5px;font-size:12px;color:#dcdcdc">Z</span><div class="fld" style="left:1280px;top:219.5px;width:43.5px;height:17px;line-height:15px;padding-left:3px;font-size:13px;color:#ececec">0</div><span class="lbl" style="left:1141px;top:240px;font-size:12px;color:#c4c4c4">X</span><div class="fld" style="left:1155px;top:239px;width:43.5px;height:17px;line-height:15px;padding-left:3px;font-size:12px;color:#d0d0d0">1</div><span class="lbl" style="left:1204.5px;top:240px;font-size:12px;color:#c4c4c4">Y</span><div class="fld" style="left:1218px;top:239px;width:43.5px;height:17px;line-height:15px;padding-left:3px;font-size:12px;color:#d0d0d0">1</div><span class="lbl" style="left:1267px;top:240px;font-size:12px;color:#c4c4c4">Z</span><div class="fld" style="left:1280px;top:239px;width:43.5px;height:17px;line-height:15px;padding-left:3px;font-size:12px;color:#d0d0d0">1</div>
<div class="abs" style="left:1015px;top:263.5px;width:313px;height:1px;background:#1f1f1f"></div>
<div class="abs" style="left:1059px;top:274px;width:224px;height:22px;background:#585858;border:1px solid #303030;border-radius:3px;color:#e4e4e4;font-size:12.5px;line-height:20px;text-align:center;letter-spacing:0.05px">Add Component</div>
</div>
</div>
<!-- PROJECT -->
<div id="proj" class="panel" style="left:0;top:460px;width:1013px;height:265px;background:#191919">
<div style="position:absolute;left:0;top:-460px;width:0;height:0">
<div class="tabbar" style="left:0;top:462px;width:1013px"></div>
<div class="tab" style="left:0;top:462px;width:78px;border-radius:0 3px 0 0"></div>
<svg class="abs" style="left:6px;top:466.5px" width="13" height="11" viewBox="0 0 13 11"><path d="M0.3 1 Q0.3 0.3 1 0.3 H4.8 L6.2 2 H12 Q12.7 2 12.7 2.7 V10 Q12.7 10.7 12 10.7 H1 Q0.3 10.7 0.3 10Z" fill="#c8c8c8"/></svg><span class="lbl" style="left:22px;top:465.5px;font-size:12.3px;color:#d6d6d6;letter-spacing:0.1px">Project</span>
<svg class="abs" style="left:88px;top:467px" width="11" height="10" viewBox="0 0 11 10"><rect x="0.5" y="0.5" width="10" height="9" rx="1" fill="#c8c8c8"/><path d="M2 2.6 H9 M2 5 H9 M2 7.4 H9" stroke="#282828" stroke-width="1"/></svg>
<span class="lbl" style="left:103.5px;top:465.5px;font-size:12.3px;color:#d6d6d6;letter-spacing:0.1px">Console</span>
<svg class="abs" style="left:975px;top:466px" width="30" height="12" viewBox="0 0 30 12"><g fill="none" stroke="#c4c4c4" stroke-width="1.2"><rect x="3" y="6" width="8" height="5" rx="0.5"/><path d="M5 6 V3.6 A2.3 2.3 0 0 1 9.6 3.6"/></g><g fill="#c4c4c4"><circle cx="25" cy="1.8" r="1.2"/><circle cx="25" cy="6" r="1.2"/><circle cx="25" cy="10.2" r="1.2"/></g></svg>
<!-- toolbar -->
<div class="abs" style="left:0;top:481px;width:1013px;height:19.5px;background:#3c3c3c"></div>
<div class="abs" style="left:0;top:500.5px;width:1013px;height:1px;background:#232323"></div>
<svg class="abs" style="left:5px;top:485px" width="13" height="13" viewBox="0 0 13 13"><path d="M6.5 0.5 V12.5 M0.5 6.5 H12.5" stroke="#d0d0d0" stroke-width="1.6"/></svg>
<div class="tri" style="left:22px;top:489.5px;border-top-color:#b8b8b8;border-left-width:3.5px;border-right-width:3.5px;border-top-width:4px"></div>
<div class="abs" style="left:582px;top:484px;width:312px;height:15px;background:#333333;border:1px solid #202020;border-radius:4px"></div><div class="abs" style="left:583px;top:485px;width:293px;height:13px;background:#242424;border-radius:3px 0 0 3px"></div>
<svg class="abs" style="left:585px;top:487px" width="9" height="9" viewBox="0 0 9 9"><g fill="none" stroke="#c0c0c0" stroke-width="1.2"><circle cx="3.4" cy="3.4" r="2.4"/><path d="M5.2 5.2 L8 8"/></g></svg>
<svg class="abs" style="left:879px;top:485px" width="13" height="13" viewBox="0 0 13 13"><g fill="none" stroke="#c0c0c0" stroke-width="1.1"><path d="M4.5 6 V2.5 A1.5 1.5 0 0 1 6 1 H10.5 A1.5 1.5 0 0 1 12 2.5 V7 A1.5 1.5 0 0 1 10.5 8.5 H7"/><rect x="1" y="7" width="5" height="5" rx="0.8"/><path d="M6 7 L10 3 M7 3 H10 V6"/></g></svg>
<div class="abs" style="left:898px;top:482px;width:1px;height:18px;background:#2c2c2c"></div><div class="abs" style="left:922px;top:482px;width:1px;height:18px;background:#2c2c2c"></div><div class="abs" style="left:948px;top:482px;width:1px;height:18px;background:#2c2c2c"></div><div class="abs" style="left:972px;top:482px;width:1px;height:18px;background:#2c2c2c"></div>
<svg class="abs" style="left:901px;top:484px" width="110" height="14" viewBox="901 484 110 14"><g fill="#c4c4c4"><rect x="903.8" y="484.2" width="4.8" height="4.8" rx="0.4"/><path d="M910.8 486 L914.2 493 H908.2 Z"/><circle cx="906" cy="494" r="3.2"/><path d="M927 489.5 L933.5 485.5 L938 486.5 L939 491 L932.5 497 Z"/><path d="M960 485 L961.7 489 L966 489.4 L962.7 492.2 L963.8 496.5 L960 494.2 L956.2 496.5 L957.3 492.2 L954 489.4 L958.3 489Z" fill="#8c8c8c"/></g><circle cx="935.5" cy="489" r="1" fill="#3c3c3c"/><g fill="none" stroke="#c4c4c4" stroke-width="1.2"><path d="M976.5 491 C979.5 486 988.5 486 991.5 491 C988.5 496 979.5 496 976.5 491Z M979 496.5 L989 485.5"/></g><circle cx="984" cy="491" r="1.8" fill="#c4c4c4"/></svg>
<span class="lbl" style="left:993.5px;top:484px;font-size:12.3px;color:#c8c8c8">22</span>
<!-- left tree -->
<div class="abs" style="left:0;top:501.5px;width:249px;height:223px;background:#383838"></div>
<div class="abs" style="left:249px;top:501.5px;width:2px;height:223px;background:#232323"></div>
<div class="abs" style="left:0;top:501px;width:249px;height:60px;overflow:hidden">
<div class="trid" style="left:3.5px;top:6px"></div>
<svg class="abs" style="left:17px;top:2px" width="13" height="12" viewBox="0 0 13 12"><path d="M6.5 0.3 L8.4 4.3 L12.8 4.8 L9.5 7.8 L10.4 12 L6.5 9.8 L2.6 12 L3.5 7.8 L0.2 4.8 L4.6 4.3Z" fill="#d0d0d0"/></svg>
<span class="lbl" style="left:34.5px;top:1px;font-size:12px;font-weight:bold;color:#dcdcdc;letter-spacing:0.2px">Favorites</span>
<svg class="abs" style="left:31px;top:18px" width="12" height="12" viewBox="0 0 12 12"><g fill="none" stroke="#c8c8c8" stroke-width="1.1"><circle cx="4.8" cy="4.8" r="3.8"/><path d="M7.6 7.6 L11.2 11.2" stroke-width="1.5"/></g></svg><span class="lbl" style="left:47px;top:16.5px;font-size:12.3px;color:#d2d2d2;letter-spacing:0.15px">All Materials</span><svg class="abs" style="left:31px;top:34px" width="12" height="12" viewBox="0 0 12 12"><g fill="none" stroke="#c8c8c8" stroke-width="1.1"><circle cx="4.8" cy="4.8" r="3.8"/><path d="M7.6 7.6 L11.2 11.2" stroke-width="1.5"/></g></svg><span class="lbl" style="left:47px;top:32.5px;font-size:12.3px;color:#d2d2d2;letter-spacing:0.15px">All Models</span><svg class="abs" style="left:31px;top:50px" width="12" height="12" viewBox="0 0 12 12"><g fill="none" stroke="#c8c8c8" stroke-width="1.1"><circle cx="4.8" cy="4.8" r="3.8"/><path d="M7.6 7.6 L11.2 11.2" stroke-width="1.5"/></g></svg><span class="lbl" style="left:47px;top:48.5px;font-size:12.3px;color:#d2d2d2;letter-spacing:0.15px">All Prefabs</span>
</div>
<div class="abs" style="left:0;top:579.5px;width:249px;height:15.5px;background:#4b4b4b"></div>
<div class="trid" style="left:3.5px;top:584.5px"></div>
<svg class="abs" style="left:17px;top:582px" width="14" height="11" viewBox="0 0 14 11"><path d="M0.5 1 Q0.5 0.3 1.2 0.3 H4.8 L6 1.8 H11 Q11.6 1.8 11.6 2.4 V3.6 H3.4 L0.5 9.4Z" fill="#c2c2c2"/><path d="M3.8 4.4 H13.6 L10.9 10.6 H0.9Z" fill="#c2c2c2"/></svg><span class="lbl" style="left:34.5px;top:580px;font-size:12px;font-weight:bold;color:#dcdcdc;letter-spacing:0.3px">Assets</span>
<div class="trir" style="left:19px;top:599.50px"></div><svg class="abs" style="left:31px;top:598.00px" width="13" height="11" viewBox="0 0 13 11"><path d="M0.3 1 Q0.3 0.3 1 0.3 H4.8 L6.2 2 H12 Q12.7 2 12.7 2.7 V10 Q12.7 10.7 12 10.7 H1 Q0.3 10.7 0.3 10Z" fill="#c2c2c2"/></svg><span class="lbl" style="left:47px;top:596.00px;font-size:12.3px;color:#d2d2d2;letter-spacing:0.15px">Character</span>
<div class="trir" style="left:19px;top:615.22px"></div><svg class="abs" style="left:31px;top:613.72px" width="13" height="11" viewBox="0 0 13 11"><path d="M0.3 1 Q0.3 0.3 1 0.3 H4.8 L6.2 2 H12 Q12.7 2 12.7 2.7 V10 Q12.7 10.7 12 10.7 H1 Q0.3 10.7 0.3 10Z" fill="#c2c2c2"/></svg><span class="lbl" style="left:47px;top:611.72px;font-size:12.3px;color:#d2d2d2;letter-spacing:0.15px">Environment</span>
<svg class="abs" style="left:31px;top:629.44px" width="13" height="11" viewBox="0 0 13 11"><path d="M0.3 1 Q0.3 0.3 1 0.3 H4.8 L6.2 2 H12 Q12.7 2 12.7 2.7 V10 Q12.7 10.7 12 10.7 H1 Q0.3 10.7 0.3 10Z" fill="#c2c2c2"/></svg><span class="lbl" style="left:47px;top:627.44px;font-size:12.3px;color:#d2d2d2;letter-spacing:0.15px">InputSystem</span>
<div class="trir" style="left:19px;top:646.66px"></div><svg class="abs" style="left:31px;top:645.16px" width="13" height="11" viewBox="0 0 13 11"><path d="M0.3 1 Q0.3 0.3 1 0.3 H4.8 L6.2 2 H12 Q12.7 2 12.7 2.7 V10 Q12.7 10.7 12 10.7 H1 Q0.3 10.7 0.3 10Z" fill="#c2c2c2"/></svg><span class="lbl" style="left:47px;top:643.16px;font-size:12.3px;color:#d2d2d2;letter-spacing:0.15px">Mobile</span>
<svg class="abs" style="left:31px;top:660.88px" width="13" height="11" viewBox="0 0 13 11"><path d="M0.3 1 Q0.3 0.3 1 0.3 H4.8 L6.2 2 H12 Q12.7 2 12.7 2.7 V10 Q12.7 10.7 12 10.7 H1 Q0.3 10.7 0.3 10Z" fill="#c2c2c2"/></svg><span class="lbl" style="left:47px;top:658.88px;font-size:12.3px;color:#d2d2d2;letter-spacing:0.15px">Prefabs</span>
<div class="trir" style="left:19px;top:678.10px"></div><svg class="abs" style="left:31px;top:676.60px" width="13" height="11" viewBox="0 0 13 11"><path d="M0.3 1 Q0.3 0.3 1 0.3 H4.8 L6.2 2 H12 Q12.7 2 12.7 2.7 V10 Q12.7 10.7 12 10.7 H1 Q0.3 10.7 0.3 10Z" fill="#c2c2c2"/></svg><span class="lbl" style="left:47px;top:674.60px;font-size:12.3px;color:#d2d2d2;letter-spacing:0.15px">Scenes</span>
<svg class="abs" style="left:31px;top:692.32px" width="13" height="11" viewBox="0 0 13 11"><path d="M0.3 1 Q0.3 0.3 1 0.3 H4.8 L6.2 2 H12 Q12.7 2 12.7 2.7 V10 Q12.7 10.7 12 10.7 H1 Q0.3 10.7 0.3 10Z" fill="#c2c2c2"/></svg><span class="lbl" style="left:47px;top:690.32px;font-size:12.3px;color:#d2d2d2;letter-spacing:0.15px">Scripts</span>
<div class="trir" style="left:19px;top:709.54px"></div><svg class="abs" style="left:31px;top:708.04px" width="13" height="11" viewBox="0 0 13 11"><path d="M0.3 1 Q0.3 0.3 1 0.3 H4.8 L6.2 2 H12 Q12.7 2 12.7 2.7 V10 Q12.7 10.7 12 10.7 H1 Q0.3 10.7 0.3 10Z" fill="#c2c2c2"/></svg><span class="lbl" style="left:47px;top:706.04px;font-size:12.3px;color:#d2d2d2;letter-spacing:0.15px">TutorialInfo</span>
<div class="abs" style="left:0;top:720.46px;width:249px;height:4.1px;overflow:hidden"><div class="trid" style="left:3.5px;top:5px"></div><svg class="abs" style="left:17px;top:2.5px" width="13" height="11" viewBox="0 0 13 11"><path d="M0.3 1 Q0.3 0.3 1 0.3 H4.8 L6.2 2 H12 Q12.7 2 12.7 2.7 V10 Q12.7 10.7 12 10.7 H1 Q0.3 10.7 0.3 10Z" fill="#c2c2c2"/></svg><span class="lbl" style="left:34.5px;top:0.5px;font-size:12px;font-weight:bold;color:#dcdcdc">Packages</span></div><div class="abs" style="left:251px;top:501.5px;width:762px;height:20px;background:#3e3e3e"></div>
<div class="abs" style="left:251px;top:521.5px;width:762px;height:1px;background:#262626"></div>
<div class="abs" style="left:251px;top:522.5px;width:762px;height:181.5px;background:#333333"></div>
<div class="abs" style="left:251px;top:704px;width:762px;height:20.5px;background:#3c3c3c"></div>
<div class="abs" style="left:251px;top:703.5px;width:762px;height:1px;background:#2a2a2a"></div>
<div class="abs" style="left:943px;top:714.3px;width:54px;height:1.4px;background:#5e5e5e"></div>
<div class="abs" style="left:968.7px;top:709.8px;width:10.4px;height:10.4px;border-radius:50%;background:#9a9a9a"></div>
<!-- scrollbar -->
<div class="abs" style="left:1000px;top:522.5px;width:13px;height:181.5px;background:#303030"></div>
<div class="abs" style="left:1002.5px;top:538px;width:9px;height:146px;border-radius:4.5px;background:#5c5c5c"></div>
<div class="abs" style="left:1003.5px;top:526px;width:0;height:0;border-left:3.5px solid transparent;border-right:3.5px solid transparent;border-bottom:4.5px solid #c4c4c4"></div>
<div class="abs" style="left:1003.5px;top:693px;width:0;height:0;border-left:3.5px solid transparent;border-right:3.5px solid transparent;border-top:4.5px solid #c4c4c4"></div>
<svg class="abs" style="left:460px;top:543px" width="49" height="41" viewBox="0 0 49 41"><path d="M0.5 3 Q0.5 0.5 3 0.5 H18.5 Q20 0.5 20.8 1.8 L23.2 6.5 Q23.8 7.5 25 7.5 H45.5 Q48.5 7.5 48.5 10.5 V37.5 Q48.5 40.5 45.5 40.5 H3.5 Q0.5 40.5 0.5 37.5Z" fill="#c2c2c2"/></svg><span class="lbl" style="left:444.4px;top:598.2px;width:80px;text-align:center;font-size:10.1px;color:#d2d2d2;letter-spacing:0.12px">Mobile</span>
<svg class="abs" style="left:538.4px;top:543px" width="49" height="41" viewBox="0 0 49 41"><path d="M0.5 3 Q0.5 0.5 3 0.5 H18.5 Q20 0.5 20.8 1.8 L23.2 6.5 Q23.8 7.5 25 7.5 H45.5 Q48.5 7.5 48.5 10.5 V37.5 Q48.5 40.5 45.5 40.5 H3.5 Q0.5 40.5 0.5 37.5Z" fill="#c2c2c2"/></svg><span class="lbl" style="left:522px;top:598.2px;width:80px;text-align:center;font-size:10.1px;color:#d2d2d2;letter-spacing:0.12px">Prefabs</span>
<svg class="abs" style="left:615.7px;top:543px" width="49" height="41" viewBox="0 0 49 41"><path d="M0.5 3 Q0.5 0.5 3 0.5 H18.5 Q20 0.5 20.8 1.8 L23.2 6.5 Q23.8 7.5 25 7.5 H45.5 Q48.5 7.5 48.5 10.5 V37.5 Q48.5 40.5 45.5 40.5 H3.5 Q0.5 40.5 0.5 37.5Z" fill="#c2c2c2"/></svg><span class="lbl" style="left:599.7px;top:598.2px;width:80px;text-align:center;font-size:10.1px;color:#d2d2d2;letter-spacing:0.12px">Scenes</span>
<svg class="abs" style="left:693.4px;top:543px" width="49" height="41" viewBox="0 0 49 41"><path d="M0.5 3 Q0.5 0.5 3 0.5 H18.5 Q20 0.5 20.8 1.8 L23.2 6.5 Q23.8 7.5 25 7.5 H45.5 Q48.5 7.5 48.5 10.5 V37.5 Q48.5 40.5 45.5 40.5 H3.5 Q0.5 40.5 0.5 37.5Z" fill="#c2c2c2"/></svg><span class="lbl" style="left:677.3px;top:598.2px;width:80px;text-align:center;font-size:10.1px;color:#d2d2d2;letter-spacing:0.12px">Scripts</span>
<svg class="abs" style="left:771px;top:543px" width="49" height="41" viewBox="0 0 49 41"><path d="M0.5 3 Q0.5 0.5 3 0.5 H18.5 Q20 0.5 20.8 1.8 L23.2 6.5 Q23.8 7.5 25 7.5 H45.5 Q48.5 7.5 48.5 10.5 V37.5 Q48.5 40.5 45.5 40.5 H3.5 Q0.5 40.5 0.5 37.5Z" fill="#c2c2c2"/></svg><span class="lbl" style="left:755px;top:598.2px;width:80px;text-align:center;font-size:10.1px;color:#d2d2d2;letter-spacing:0.12px">TutorialInfo</span>
<svg class="abs" style="left:849px;top:536px" width="49" height="55" viewBox="0 0 49 55"><path d="M3 0 H36 L48.5 12.5 V52 Q48.5 55 45.5 55 H3 Q0 55 0 52 V3 Q0 0 3 0Z" fill="#ececec"/><g fill="#8a8a8a"><rect x="8" y="20.3" width="31" height="3.3" rx="1.6"/><rect x="8" y="27.3" width="31" height="3.6" rx="1.6"/><rect x="8" y="35" width="19" height="3.8" rx="1.6"/></g></svg>
<span class="lbl" style="left:832px;top:598.2px;width:80px;text-align:center;font-size:10.1px;color:#d2d2d2;letter-spacing:0.12px">license</span>
<svg class="abs" style="left:926px;top:536.2px" width="57" height="56" viewBox="0 0 57 56"><g fill="none" stroke="#7fd6fc" stroke-width="4" stroke-linejoin="round" stroke-linecap="round"><path d="M42 26 V15 Q42 13.5 40.6 12.8 L24.4 3.8 Q23 3.1 21.6 3.8 L4.8 12.8 Q3.4 13.5 3.4 15 V35.6 Q3.4 37.1 4.8 37.9 L21.6 46.8 Q23 47.5 24.2 47"/><path d="M4.4 14.2 L23 24.6 L41 14.2 M23 24.6 V46.8"/></g><g fill="none" stroke="#f4683c" stroke-width="3.9" stroke-linejoin="round"><path d="M39.5 29 H38 Q35.2 29 35.2 31.8 V37 Q35.2 40.3 31.6 40.7 Q35.2 41.1 35.2 44.4 V49.6 Q35.2 52.4 38 52.4 H39.5"/><path d="M46.5 29 H48 Q50.8 29 50.8 31.8 V37 Q50.8 40.3 54.4 40.7 Q50.8 41.1 50.8 44.4 V49.6 Q50.8 52.4 48 52.4 H46.5"/></g></svg><span class="lbl" style="left:910px;top:598.2px;width:80px;text-align:center;font-size:10.1px;color:#d2d2d2;letter-spacing:0.12px">Readme</span>
<svg class="abs" style="left:460px;top:627px" width="57" height="56" viewBox="0 0 57 56"><g fill="none" stroke="#7fd6fc" stroke-width="4" stroke-linejoin="round" stroke-linecap="round"><path d="M42 26 V15 Q42 13.5 40.6 12.8 L24.4 3.8 Q23 3.1 21.6 3.8 L4.8 12.8 Q3.4 13.5 3.4 15 V35.6 Q3.4 37.1 4.8 37.9 L21.6 46.8 Q23 47.5 24.2 47"/><path d="M4.4 14.2 L23 24.6 L41 14.2 M23 24.6 V46.8"/></g><g fill="none" stroke="#f4683c" stroke-width="3.9" stroke-linejoin="round"><path d="M39.5 29 H38 Q35.2 29 35.2 31.8 V37 Q35.2 40.3 31.6 40.7 Q35.2 41.1 35.2 44.4 V49.6 Q35.2 52.4 38 52.4 H39.5"/><path d="M46.5 29 H48 Q50.8 29 50.8 31.8 V37 Q50.8 40.3 54.4 40.7 Q50.8 41.1 50.8 44.4 V49.6 Q50.8 52.4 48 52.4 H46.5"/></g></svg><span class="lbl" style="left:444.5px;top:688.6px;width:80px;text-align:center;font-size:10.1px;color:#d2d2d2;letter-spacing:0.12px">UniversalR...</span>
<svg class="abs" style="left:426px;top:653px" width="14" height="28" viewBox="0 0 14 28"><path d="M2 1.6 H4 Q6.7 1.6 6.7 4.3 V10.6 Q6.7 13.8 9.9 14.2 Q6.7 14.6 6.7 17.8 V24.1 Q6.7 26.8 4 26.8 H2" fill="none" stroke="#f4683c" stroke-width="3.2"/></svg><span class="lbl" style="left:428px;top:688px;font-size:10.6px;color:#d2d2d2">..</span>
</div>
</div>
<!-- STATUS -->
<div id="status" class="abs" style="left:0;top:725px;width:1328px;height:22px;background:#191919">
<svg class="abs" style="left:1220px;top:0" width="108" height="22" viewBox="1220 725 108 22">
<g stroke="#2b2b2b" stroke-width="1"><path d="M1224.5 727 V747 M1250.5 727 V747 M1275.5 727 V747 M1301.5 727 V747"/></g>
<!-- bug -->
<g fill="#c4c4c4"><ellipse cx="1237" cy="738.6" rx="4.3" ry="5.2"/><circle cx="1237" cy="732.6" r="2.3"/><path d="M1231 736 L1233.4 737.4 M1243 736 L1240.6 737.4 M1230.5 740 H1233 M1243.5 740 H1241 M1231.3 744 L1233.6 742.2 M1242.7 744 L1240.4 742.2" stroke="#c4c4c4" stroke-width="1.1"/></g>
<path d="M1231 730 L1244 744" stroke="#191919" stroke-width="2.6"/><path d="M1230.6 730.6 L1243.4 744.4" stroke="#c4c4c4" stroke-width="1.1"/>
<!-- stack -->
<g fill="#c4c4c4"><ellipse cx="1263" cy="733.4" rx="5.6" ry="2.7"/><path d="M1257.4 735.5 Q1263 738.8 1268.6 735.5 V738.2 Q1263 741.5 1257.4 738.2Z"/><path d="M1257.4 739.8 Q1263 743.1 1268.6 739.8 V742.2 Q1263 745.5 1257.4 742.2Z"/></g>
<path d="M1257 730.5 L1269.5 744" stroke="#191919" stroke-width="2.6"/><path d="M1256.8 731 L1269 744.4" stroke="#c4c4c4" stroke-width="1.1"/>
<!-- refresh -->
<g fill="none" stroke="#c4c4c4" stroke-width="1.2"><path d="M1282.4 735.5 A6 6 0 0 1 1293 733 M1293.6 738.5 A6 6 0 0 1 1283 741"/></g>
<path d="M1294.4 730.6 V734.6 H1290.4Z M1281.6 743.4 V739.4 H1285.6Z" fill="#c4c4c4"/>
<path d="M1288 732.8 A2.9 2.9 0 0 1 1289.6 738.2 V739.4 H1286.4 V738.2 A2.9 2.9 0 0 1 1288 732.8Z M1286.8 740.2 H1289.2 V741.4 H1286.8Z" fill="#c4c4c4"/>
<path d="M1282.4 730.6 L1294.6 744" stroke="#191919" stroke-width="2.4"/><path d="M1282 731 L1294.2 744.4" stroke="#c4c4c4" stroke-width="1.1"/>
<!-- check -->
<circle cx="1314" cy="737" r="6.5" fill="none" stroke="#c4c4c4" stroke-width="1.1"/><path d="M1310.8 737.2 L1313.2 739.6 L1317.4 734.8" fill="none" stroke="#c4c4c4" stroke-width="1.5"/>
</svg>
</div>
<!-- CONTEXT MENU -->
<div id="ctx" class="abs">
<div class="abs" style="left:2px;top:135px;width:252px;height:33.5px;border:3px solid #6cc646;border-radius:8px;background:#f0f0f0"></div>
<div class="sep" style="top:91.7px"></div>
<div class="sep" style="top:197.0px"></div>
<div class="sep" style="top:227.1px"></div>
<div class="sep" style="top:258.1px"></div>
<span class="mi" style="top:5.5px">Cut</span>
<span class="mi" style="top:26.9px">Copy</span>
<span class="mi dis" style="top:48.5px">Paste</span>
<span class="mi dis" style="top:70.2px">Paste As Child</span>
<span class="mi" style="top:100.4px">Rename</span>
<span class="mi" style="top:122.1px">Duplicate</span>
<span class="mi" style="top:143.4px">Delete</span>
<span class="mi" style="top:174.3px">Select Children</span>
<span class="mi" style="top:204.5px">Set as Default Parent</span>
<span class="mi" style="top:235.4px">Prefab</span><svg class="ar" style="top:238.4px" viewBox="0 0 9 9"><path d="M2.5 0.8 L6.5 4.6 L2.5 8.4" fill="none" stroke="#333" stroke-width="1.1"/></svg>
<span class="mi" style="top:265.9px">Create Empty</span>
<span class="mi" style="top:287.5px">Create Empty Parent</span>
<span class="mi" style="top:309.2px">3D Object</span><svg class="ar" style="top:312.2px" viewBox="0 0 9 9"><path d="M2.5 0.8 L6.5 4.6 L2.5 8.4" fill="none" stroke="#333" stroke-width="1.1"/></svg>
<span class="mi" style="top:330.7px">Effects</span><svg class="ar" style="top:333.7px" viewBox="0 0 9 9"><path d="M2.5 0.8 L6.5 4.6 L2.5 8.4" fill="none" stroke="#333" stroke-width="1.1"/></svg>
<span class="mi" style="top:352.5px">Light</span><svg class="ar" style="top:355.5px" viewBox="0 0 9 9"><path d="M2.5 0.8 L6.5 4.6 L2.5 8.4" fill="none" stroke="#333" stroke-width="1.1"/></svg>
<span class="mi" style="top:374.0px">Audio</span><svg class="ar" style="top:377.0px" viewBox="0 0 9 9"><path d="M2.5 0.8 L6.5 4.6 L2.5 8.4" fill="none" stroke="#333" stroke-width="1.1"/></svg>
<span class="mi" style="top:395.5px">Video</span><svg class="ar" style="top:398.5px" viewBox="0 0 9 9"><path d="M2.5 0.8 L6.5 4.6 L2.5 8.4" fill="none" stroke="#333" stroke-width="1.1"/></svg>
<span class="mi" style="top:417.2px">UI</span><svg class="ar" style="top:420.2px" viewBox="0 0 9 9"><path d="M2.5 0.8 L6.5 4.6 L2.5 8.4" fill="none" stroke="#333" stroke-width="1.1"/></svg>
<span class="mi" style="top:439.0px">UI Toolkit</span><svg class="ar" style="top:442.0px" viewBox="0 0 9 9"><path d="M2.5 0.8 L6.5 4.6 L2.5 8.4" fill="none" stroke="#333" stroke-width="1.1"/></svg>
<span class="mi" style="top:460.5px">Volume</span><svg class="ar" style="top:463.5px" viewBox="0 0 9 9"><path d="M2.5 0.8 L6.5 4.6 L2.5 8.4" fill="none" stroke="#333" stroke-width="1.1"/></svg>
<span class="mi" style="top:482.2px">Rendering</span><svg class="ar" style="top:485.2px" viewBox="0 0 9 9"><path d="M2.5 0.8 L6.5 4.6 L2.5 8.4" fill="none" stroke="#333" stroke-width="1.1"/></svg>
<span class="mi" style="top:504.0px">Camera</span>
<span class="mi" style="top:525.2px">Cinemachine</span><svg class="ar" style="top:528.2px" viewBox="0 0 9 9"><path d="M2.5 0.8 L6.5 4.6 L2.5 8.4" fill="none" stroke="#333" stroke-width="1.1"/></svg>
<span class="mi" style="top:547.3px">Visual Scripting Scene Variables</span>
<span class="mi" style="top:569.1px">Move To View</span>
</div>
</body></html>
